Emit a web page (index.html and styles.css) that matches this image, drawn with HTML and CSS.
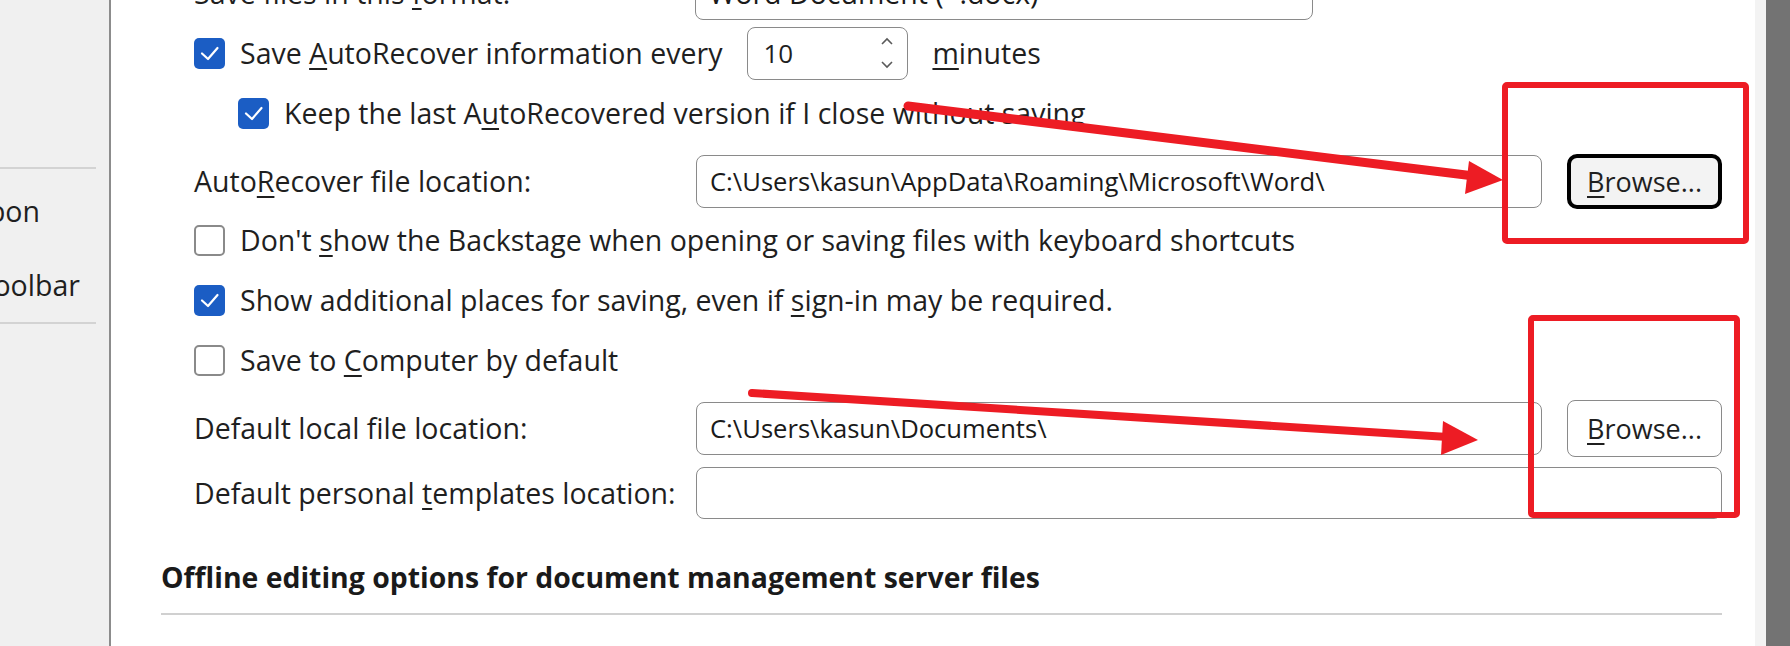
FILE: index.html
```html
<!DOCTYPE html>
<html lang="en">

<head>
    <meta charset="UTF-8">
    <meta name="viewport" content="width=device-width, initial-scale=1.0">
    <title>Word Options - Save</title>
    <link rel="stylesheet" href="styles.css">
</head>

<body>
    <div class="window">
        <aside class="sidebar">
            <div class="nav-spacer"></div>
            <div class="nav-group">
                <div class="nav-item">Customize Ribbon</div>
                <div class="nav-item">Quick Access Toolbar</div>
            </div>
        </aside>

        <main class="panel">
            <div class="options">
                <div class="row">
                    <span class="label">Save files in this <u>f</u>ormat:</span>
                    <div class="select">Word Document (*.docx)</div>
                </div>

                <div class="row">
                    <span class="check checked">
                        <svg viewBox="0 0 31 31"><polyline points="8,15.5 14,21 23.5,10" /></svg>
                    </span>
                    <span>Save <u>A</u>utoRecover information every</span>
                    <div class="spin">
                        <span>10</span>
                        <svg class="spin-arrows" viewBox="0 0 14 34">
                            <polyline points="2,8 7,3 12,8" />
                            <polyline points="2,26 7,31 12,26" />
                        </svg>
                    </div>
                    <span class="unit"><u>m</u>inutes</span>
                </div>

                <div class="row sub">
                    <span class="check checked">
                        <svg viewBox="0 0 31 31"><polyline points="8,15.5 14,21 23.5,10" /></svg>
                    </span>
                    <span>Keep the last A<u>u</u>toRecovered version if I close without saving</span>
                </div>

                <div class="row path-row">
                    <span class="label">Auto<u>R</u>ecover file location:</span>
                    <div class="field">C:\Users\kasun\AppData\Roaming\Microsoft\Word\</div>
                    <button class="browse focused"><u>B</u>rowse...</button>
                </div>

                <div class="row">
                    <span class="check"></span>
                    <span>Don't <u>s</u>how the Backstage when opening or saving files with keyboard shortcuts</span>
                </div>

                <div class="row">
                    <span class="check checked">
                        <svg viewBox="0 0 31 31"><polyline points="8,15.5 14,21 23.5,10" /></svg>
                    </span>
                    <span>Show additional places for saving, even if <u>s</u>ign-in may be required.</span>
                </div>

                <div class="row">
                    <span class="check"></span>
                    <span>Save to <u>C</u>omputer by default</span>
                </div>

                <div class="row path-row">
                    <span class="label">Default local f<u>i</u>le location:</span>
                    <div class="field">C:\Users\kasun\Documents\</div>
                    <button class="browse"><u>B</u>rowse...</button>
                </div>

                <div class="row path-row templates">
                    <span class="label">Default personal <u>t</u>emplates location:</span>
                    <div class="field"></div>
                </div>
            </div>

            <h2 class="section-title">Offline editing options for document management server files</h2>
            <div class="divider"></div>
        </main>

        <div class="scrollbar">
            <div class="scroll-track"></div>
            <div class="scroll-thumb"></div>
        </div>
    </div>

    <!-- red markup drawn over the screenshot -->
    <svg class="annotations" viewBox="0 0 1790 646">
        <g fill="none" stroke="#ed1c24" stroke-width="6">
            <rect x="1505" y="85" width="241" height="156" rx="2" />
            <rect x="1531" y="318" width="206" height="197" rx="2" />
        </g>
        <g stroke="#ed1c24" stroke-linecap="round">
            <line x1="908" y1="106" x2="1474" y2="176" stroke-width="9" />
            <line x1="752" y1="393" x2="1448" y2="437" stroke-width="8" />
        </g>
        <g fill="#ed1c24">
            <polygon points="1503,180 1469,161 1465,194" />
            <polygon points="1478,440 1443,421 1441,455" />
        </g>
    </svg>
</body>

</html>
```

FILE: styles.css
```css
* {
    box-sizing: border-box;
}

html,
body {
    margin: 0;
    padding: 0;
}

body {
    width: 1790px;
    height: 646px;
    overflow: hidden;
    position: relative;
    background-color: #ffffff;
    font-family: "Open Sans", "Noto Sans", sans-serif;
    font-size: 28.5px;
    color: #1f1f1f;
}

u {
    text-decoration-thickness: 2px;
    text-underline-offset: 4px;
}

.window {
    display: flex;
    height: 646px;
}

/* left nav */
.sidebar {
    width: 111px;
    flex: none;
    background-color: #f0f0f0;
    border-right: 2px solid #8c8c8c;
    overflow: hidden;
}

.nav-spacer {
    height: 167px;
}

.nav-group {
    width: 96px;
    padding-top: 5px;
    border-top: 2px solid #d3d3d3;
    border-bottom: 2px solid #d3d3d3;
}

.nav-item {
    height: 74px;
    display: flex;
    align-items: center;
    white-space: nowrap;
    margin-left: -201px;
}

/* main panel */
.panel {
    flex: 1;
    padding: 0 33px 0 50px;
    margin-top: -37px;
}

.options {
    padding-left: 33px;
}

.row {
    display: flex;
    align-items: center;
    height: 60px;
    white-space: nowrap;
}

.row.sub {
    padding-left: 44px;
}

.path-row {
    height: 58px;
    margin-top: 9px;
}

.path-row.templates {
    height: 54px;
}

.label {
    width: 502px;
    flex: none;
}

.check {
    width: 31px;
    height: 31px;
    flex: none;
    margin-right: 15px;
    border: 2px solid #8a8a8a;
    border-radius: 5px;
    background-color: #ffffff;
}

.check.checked {
    border: none;
    background-color: #1b5dc4;
}

.check svg {
    display: block;
    width: 31px;
    height: 31px;
    fill: none;
    stroke: #ffffff;
    stroke-width: 2.2;
    stroke-linecap: round;
    stroke-linejoin: round;
}

.select,
.field {
    height: 53px;
    display: flex;
    align-items: center;
    border: 1.5px solid #8a8a8a;
    border-radius: 8px;
    padding-left: 13px;
    font-size: 25.6px;
    color: #1a1a1a;
}

.select {
    width: 618px;
    margin-left: -1px;
    font-size: 28.5px;
}

.field {
    flex: 1;
}

.templates .field {
    height: 52px;
}

.spin {
    width: 161px;
    height: 53px;
    margin-left: 25px;
    display: flex;
    align-items: center;
    justify-content: space-between;
    padding: 0 13px 0 15px;
    border: 1.5px solid #8a8a8a;
    border-radius: 8px;
    font-size: 26px;
}

.spin-arrows {
    width: 14px;
    height: 34px;
    fill: none;
    stroke: #5a5a5a;
    stroke-width: 1.6;
}

.unit {
    margin-left: 24px;
}

.browse {
    width: 155px;
    height: 57px;
    margin-left: 25px;
    flex: none;
    font-family: inherit;
    font-size: 27px;
    color: #1f1f1f;
    background-color: #ffffff;
    border: 1.5px solid #8a8a8a;
    border-radius: 8px;
    padding: 0;
}

.browse.focused {
    height: 55px;
    background-color: #f3f3f3;
    border: 4px solid #000000;
    border-radius: 10px;
}

.section-title {
    margin: 37px 0 0;
    height: 40px;
    line-height: 40px;
    font-size: 28.4px;
    font-weight: 700;
    color: #1a1a1a;
}

.divider {
    margin-top: 16px;
    height: 2px;
    background-color: #d0d0d0;
}

/* right scroll bar */
.scrollbar {
    width: 35px;
    flex: none;
    display: flex;
}

.scroll-track {
    width: 11px;
    background-color: #f3f3f3;
}

.scroll-thumb {
    flex: 1;
    background-color: #737373;
}

.annotations {
    position: absolute;
    top: 0;
    left: 0;
    width: 1790px;
    height: 646px;
    pointer-events: none;
}
```
